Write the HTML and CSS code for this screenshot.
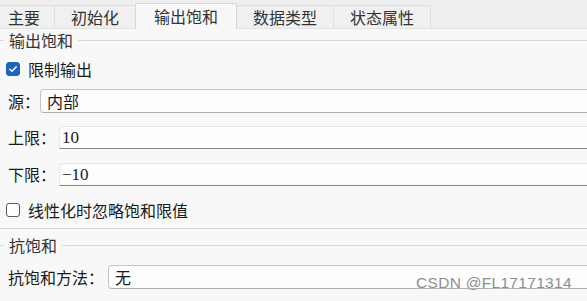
FILE: index.html
```html
<!DOCTYPE html>
<html lang="zh-CN">
<head>
    <meta charset="UTF-8">
    <title>输出饱和</title>
    <link rel="stylesheet" href="styles.css">
</head>
<body>
    <div class="tabs">
        <div class="tab first">主要</div>
        <div class="tab">初始化</div>
        <div class="tab active">输出饱和</div>
        <div class="tab">数据类型</div>
        <div class="tab">状态属性</div>
    </div>

    <div class="panel">
        <!-- 输出饱和 -->
        <div class="group-title"><span>输出饱和</span></div>
        <div class="check-row r-cb1">
            <span class="box checked">
                <svg width="10" height="10" viewBox="0 0 10 10"><path d="M1.8 5.2 L4 7.3 L8.3 2.8" fill="none" stroke="#fff" stroke-width="1.4" stroke-linecap="round" stroke-linejoin="round"/></svg>
            </span>
            限制输出
        </div>
        <div class="field r-src">
            <label class="lb-src">源：</label>
            <div class="combo">内部</div>
        </div>
        <div class="field r-up">
            <label class="lb-lim">上限：</label>
            <div class="edit">10</div>
        </div>
        <div class="field r-low">
            <label class="lb-lim">下限：</label>
            <div class="edit">−10</div>
        </div>
        <div class="check-row r-cb2">
            <span class="box"></span>
            线性化时忽略饱和限值
        </div>

        <div class="sep"></div>

        <!-- 抗饱和 -->
        <div class="group-title r-g2"><span>抗饱和</span></div>
        <div class="field r-aw">
            <label class="lb-aw">抗饱和方法：</label>
            <div class="combo">无</div>
        </div>
    </div>

    <div class="watermark">CSDN @FL17171314</div>
</body>
</html>
```

FILE: styles.css
```css
html, body { margin: 0; padding: 0; }
body {
    width: 587px;
    height: 301px;
    overflow: hidden;
    position: relative;
    background: #f8f8f8;
    font-family: "Liberation Serif", "Noto Sans CJK SC", serif;
    font-size: 16px;
    color: #1a1a1a;
}
.tabs {
    display: flex;
    align-items: flex-end;
    height: 29px;
    background: #efefef;
    border-bottom: 1px solid #e2e2e2;
    box-sizing: border-box;
}
.tab {
    height: 23px;
    line-height: 22px;
    padding: 0 16px;
    background: #f0f0f0;
    border: 1px solid #dedede;
    border-bottom: none;
    border-left: none;
    box-sizing: border-box;
    font-family: "Noto Sans CJK SC", sans-serif;
    color: #333;
}
.tab.first { margin-left: -8px; padding: 0 14px 0 16px; }
.tab.active {
    height: 26px;
    margin-bottom: -1px;
    line-height: 25px;
    padding: 0 18px;
    background: #f8f8f8;
    border: 1px solid #d8d8d8;
    border-bottom: none;
    margin-left: -1px;
}
.panel {
    display: flex;
    flex-direction: column;
}
.group-title {
    display: flex;
    align-items: center;
    height: 22px;
    font-family: "Noto Sans CJK SC", sans-serif;
    color: #333;
}
.group-title::before {
    content: "";
    width: 4px;
    border-top: 1px solid #d8d8d8;
    margin-right: 5px;
}
.group-title::after {
    content: "";
    flex: 1;
    border-top: 1px solid #d8d8d8;
    margin-left: 5px;
}
.check-row {
    display: flex;
    align-items: center;
    height: 22px;
    padding-left: 6px;
    font-family: "Noto Sans CJK SC", sans-serif;
}
.box {
    width: 14px;
    height: 14px;
    box-sizing: border-box;
    border: 1.2px solid #5a5a5a;
    border-radius: 3px;
    background: #fff;
    margin-right: 8px;
    display: flex;
    align-items: center;
    justify-content: center;
}
.box.checked {
    background: #1f63c1;
    border-color: #1f63c1;
}
.field {
    display: flex;
    align-items: center;
    height: 24px;
    padding-left: 8px;
}
.field label {
    font-family: "Noto Sans CJK SC", sans-serif;
}
.lb-src { margin-right: 0; }
.lb-lim { margin-right: 3px; }
.lb-aw { margin-right: 4px; }
.combo, .edit {
    flex: 1;
    height: 24px;
    line-height: 22px;
    box-sizing: border-box;
    padding-left: 6px;
    margin-right: -6px;
    background: #fdfdfd;
}
.combo {
    border: 1px solid #c4c4c4;
    border-bottom-color: #b0b0b0;
    border-radius: 4px;
    font-family: "Noto Sans CJK SC", sans-serif;
}
.edit {
    border: 1px solid #e6e6e6;
    border-bottom: 1px solid #868686;
    border-radius: 3px 3px 0 0;
    height: 23px;
    padding-left: 2px;
    font-size: 17px;
}
.r-cb1 { margin-top: 7px; }
.r-src { margin-top: 9px; }
.r-up { margin-top: 12px; }
.r-low { margin-top: 13px; }
.r-cb2 { margin-top: 13px; }
.sep {
    margin-top: 7px;
    border-top: 1px solid #d8d8d8;
}
.r-g2 { margin-top: 5px; }
.r-aw { margin-top: 9px; }
.watermark {
    position: absolute;
    left: 416px;
    top: 274px;
    font-family: "Liberation Sans", sans-serif;
    font-size: 15.5px;
    color: #8e8e8e;
    letter-spacing: 0.3px;
    text-shadow: 0 0 1px #fff;
}
```
